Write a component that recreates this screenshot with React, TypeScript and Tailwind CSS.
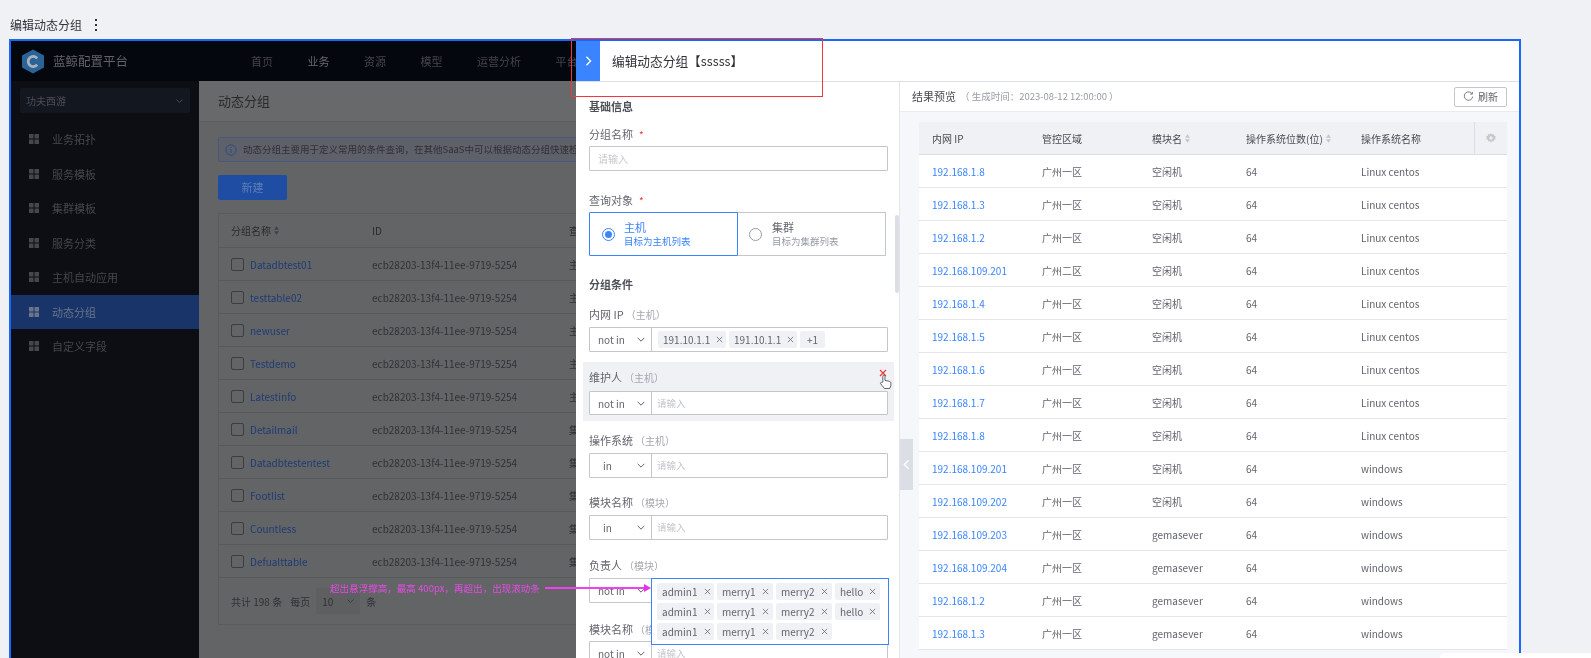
import React from "react";

const nav = [
  ["首页", "text-[#43454b]"],
  ["业务", "text-[#66686d]"],
  ["资源", "text-[#43454b]"],
  ["模型", "text-[#43454b]"],
  ["运营分析", "text-[#43454b]"],
  ["平台管理", "text-[#43454b]"],
];
const side = ["业务拓扑", "服务模板", "集群模板", "服务分类", "主机自动应用", "动态分组", "自定义字段"];
const groups: [string, string][] = [
  ["Datadbtest01", "主机"],
  ["testtable02", "主机"],
  ["newuser", "主机"],
  ["Testdemo", "主机"],
  ["Latestinfo", "主机"],
  ["Detailmail", "集群"],
  ["Datadbtestentest", "集群"],
  ["Footlist", "集群"],
  ["Countless", "集群"],
  ["Defualttable", "集群"],
];
const hosts = [
  ["192.168.1.8", "广州一区", "空闲机", "Linux centos"],
  ["192.168.1.3", "广州一区", "空闲机", "Linux centos"],
  ["192.168.1.2", "广州一区", "空闲机", "Linux centos"],
  ["192.168.109.201", "广州二区", "空闲机", "Linux centos"],
  ["192.168.1.4", "广州一区", "空闲机", "Linux centos"],
  ["192.168.1.5", "广州一区", "空闲机", "Linux centos"],
  ["192.168.1.6", "广州一区", "空闲机", "Linux centos"],
  ["192.168.1.7", "广州一区", "空闲机", "Linux centos"],
  ["192.168.1.8", "广州一区", "空闲机", "Linux centos"],
  ["192.168.109.201", "广州一区", "空闲机", "windows"],
  ["192.168.109.202", "广州一区", "空闲机", "windows"],
  ["192.168.109.203", "广州一区", "gemasever", "windows"],
  ["192.168.109.204", "广州一区", "gemasever", "windows"],
  ["192.168.1.2", "广州一区", "gemasever", "windows"],
  ["192.168.1.3", "广州一区", "gemasever", "windows"],
];

function Chevron({ className }: { className: string }) {
  return (
    <svg viewBox="0 0 12 8" fill="none" stroke="currentColor" strokeWidth="1.2" className={className}>
      <path d="M2 2l4 4 4-4" />
    </svg>
  );
}
function Grid() {
  return (
    <svg viewBox="0 0 10 10" className="w-[10px] h-[10px] shrink-0" fill="currentColor">
      <rect width="4.5" height="4.5" />
      <rect x="5.5" width="4.5" height="4.5" />
      <rect y="5.5" width="4.5" height="4.5" />
      <rect x="5.5" y="5.5" width="4.5" height="4.5" />
    </svg>
  );
}
function Sort({ light }: { light?: boolean }) {
  return (
    <svg viewBox="0 0 6 10" className="w-[5px] h-[9px] ml-[3px] inline-block" fill={light ? "#c4c6cc" : "#404145"}>
      <path d="M3 0l3 4H0zM3 10L0 6h6z" />
    </svg>
  );
}
function Close() {
  return (
    <svg viewBox="0 0 8 8" className="w-[7px] h-[7px] shrink-0 ml-[6px]" fill="none" stroke="#63656e" strokeWidth="0.9">
      <path d="M1 1l6 6M7 1L1 7" />
    </svg>
  );
}
function Tag({ t, w }: { t: string; w: string }) {
  return (
    <span className={`flex items-center justify-between h-[17px] px-[5px] rounded-[2px] bg-[#f0f1f5] text-[10px] text-[#63656e] ${w}`}>
      {t}
      <Close />
    </span>
  );
}
function FieldLabel({ a, b, cls }: { a: string; b?: string; cls: string }) {
  return (
    <div className={`h-4 flex items-center text-[11px] text-[#63656e] ${cls}`}>
      {a}
      {b && <span className="text-[10px] text-[#a5a7ae] ml-[2px]">（{b}）</span>}
    </div>
  );
}
function CondRow({ op, cls, children }: { op: string; cls: string; children?: React.ReactNode }) {
  return (
    <div className={`relative flex h-[25px] border border-[#c4c6cc] bg-white rounded-[1px] ${cls}`}>
      <div className={`w-[62px] shrink-0 flex items-center justify-between border-r border-[#c4c6cc] bg-white text-[10px] text-[#63656e] pr-[5px] ${op === "in" ? "pl-[13px]" : "pl-[8px]"}`}>
        {op}
        <Chevron className="w-[10px] h-[7px] text-[#63656e]" />
      </div>
      {children ?? <div className="flex-1 flex items-center pl-[5px] text-[9.5px] text-[#c4c6cc]">请输入</div>}
    </div>
  );
}
function Logo() {
  return (
    <svg viewBox="0 0 24 26" className="w-[22px] h-[25px] shrink-0">
      <polygon points="12,0 24,6.5 24,19.5 12,26 0,19.5 0,6.5" fill="#2a6397" />
      <path d="M16.5 9.5a5.5 5.5 0 1 0 0 7" fill="none" stroke="#aab3bd" strokeWidth="3" />
    </svg>
  );
}

export default function App() {
  return (
    <div className="relative w-[1591px] h-[658px] overflow-hidden bg-[#f0f1f5] font-['Noto_Sans_CJK_SC','Liberation_Sans',sans-serif] blur-[0.4px]">
      <div className="h-[39px] pl-[10px] pt-[11px] flex items-center text-[12px] text-[#313238]">
        编辑动态分组
        <span className="ml-[13px] flex flex-col gap-[3px]">
          <i className="block w-[2px] h-[2px] bg-[#313238]" />
          <i className="block w-[2px] h-[2px] bg-[#313238]" />
          <i className="block w-[2px] h-[2px] bg-[#313238]" />
        </span>
      </div>

      <div className="relative ml-[9px] w-[1512px] h-[625px] border-2 border-b-0 border-[#1768ff] overflow-hidden bg-[#0c0e14]">
        {/* 顶栏 */}
        <div className="h-[40px] bg-[#05070f] flex items-center pl-[11px]">
          <Logo />
          <div className="ml-[9px] w-[198px] text-[12.5px] text-[#62646a]">蓝鲸配置平台</div>
          <div className="flex gap-[34.5px] text-[11px]">
            {nav.map(([t, c]) => (
              <span key={t} className={`${c} whitespace-nowrap`}>{t}</span>
            ))}
          </div>
        </div>

        <div className="flex h-[585px]">
          {/* 侧栏 */}
          <div className="w-[188px] shrink-0 bg-[#0c0e14]">
            <div className="mx-[9px] mt-[7px] h-[25px] rounded-[2px] bg-[#131720] flex items-center justify-between pl-[6px] pr-[6px] text-[10px] text-[#4d4f55]">
              功夫西游
              <Chevron className="w-[9px] h-[6px] text-[#4d4f55]" />
            </div>
            <div className="mt-[9px] flex flex-col">
              {side.map((s) => (
                <div
                  key={s}
                  className={`h-[34.5px] flex items-center pl-[18px] gap-[13px] text-[11px] ${
                    s === "动态分组" ? "bg-[#183468] text-[#6b7589]" : "text-[#45474d]"
                  }`}
                >
                  <Grid />
                  {s}
                </div>
              ))}
            </div>
          </div>

          {/* 主内容 */}
          <div className="flex-1 bg-[#636466] min-w-0">
            <div className="h-[41px] bg-[#68696a] border-b border-[#5c5d5f] flex items-center pl-[19px] text-[13px] text-[#2a2b2d]">
              动态分组
            </div>
            <div className="px-[19px] pt-[15px]">
              <div className="h-[25px] w-[1000px] rounded-[2px] border border-[#49597a] bg-[#5e6169] flex items-center pl-[6px] gap-[6px] text-[9.5px] text-[#2f3033]">
                <svg viewBox="0 0 12 12" className="w-[12px] h-[12px]" fill="none" stroke="#274a8c" strokeWidth="0.9">
                  <circle cx="6" cy="6" r="5.2" />
                  <path d="M6 5v4M6 3v1" />
                </svg>
                动态分组主要用于定义常用的条件查询，在其他SaaS中可以根据动态分组快速检索
              </div>
              <button className="mt-[13px] w-[69px] h-[25px] rounded-[2px] bg-[#1e4da3] flex items-center justify-center text-[11px] text-[#5d7cb5]">
                新建
              </button>
              <div className="mt-[13px] w-[1000px] border border-[#5a5b5d] text-[10px] text-[#303134]">
                <div className="h-[34px] border-b border-[#58595b] flex items-center pl-[12px] text-[#2a2b2d]">
                  <div className="w-[141px] flex items-center">分组名称<Sort /></div>
                  <div className="w-[197px]">ID</div>
                  <div>查询对象</div>
                </div>
                {groups.map(([n, k]) => (
                  <div key={n} className="h-[33px] border-b border-[#58595b] flex items-center pl-[12px]">
                    <div className="w-[141px] flex items-center">
                      <i className="block w-[13px] h-[13px] border border-[#3c3d40] rounded-[2px] mr-[6px]" />
                      <span className="text-[10px] text-[#1f3b75]">{n}</span>
                    </div>
                    <div className="w-[197px]">ecb28203-13f4-11ee-9719-5254</div>
                    <div>{k}</div>
                  </div>
                ))}
                <div className="h-[46px] flex items-center pl-[12px]">
                  共计 198 条
                  <span className="ml-[8px]">每页</span>
                  <span className="ml-[6px] w-[44px] h-[26px] bg-[#5e5f61] flex items-center justify-between pl-[6px] pr-[5px]">
                    10
                    <Chevron className="w-[9px] h-[6px] text-[#3a3b3e]" />
                  </span>
                  <span className="ml-[6px]">条</span>
                </div>
              </div>
            </div>
          </div>
        </div>

        {/* 侧滑面板 */}
        <div className="absolute left-[565px] top-0 bottom-0 right-0 bg-white flex flex-col">
          <div className="h-[41px] shrink-0 flex border-b border-[#dcdee5] bg-white">
            <div className="w-[24px] bg-[#3a84ff] flex items-center justify-center">
              <svg viewBox="0 0 8 12" className="w-[7px] h-[10px]" fill="none" stroke="#fff" strokeWidth="1.6">
                <path d="M1.5 1l5 5-5 5" />
              </svg>
            </div>
            <div className="pl-[12px] flex items-center text-[12.7px] text-[#313238]">编辑动态分组【sssss】</div>
          </div>
          <div className="flex-1 flex min-h-0">
            {/* 表单 */}
            <div className="relative w-[324px] shrink-0 bg-white border-r border-[#e4e5ea] pl-[13px] pr-[11px] pt-[16px]">
              <div className="h-4 flex items-center text-[11px] font-bold text-[#4f5158]">基础信息</div>
              <div className="mt-[12px] h-4 flex items-center text-[11px] text-[#63656e]">
                分组名称<span className="ml-[6px] text-[#ea3636] text-[10px]">*</span>
              </div>
              <div className="mt-[4px] h-[25px] border border-[#c4c6cc] rounded-[1px] flex items-center pl-[8px] text-[10px] text-[#c4c6cc]">请输入</div>
              <div className="mt-[21px] h-4 flex items-center text-[11px] text-[#63656e]">
                查询对象<span className="ml-[6px] text-[#ea3636] text-[10px]">*</span>
              </div>
              <div className="mt-[4px] h-[44px] w-[297px] flex">
                <div className="w-[149px] border border-[#3a84ff] rounded-l-[1px] flex items-center pl-[12px] gap-[9px]">
                  <span className="w-[13px] h-[13px] rounded-full border border-[#3a84ff] flex items-center justify-center">
                    <i className="block w-[7px] h-[7px] rounded-full bg-[#3a84ff]" />
                  </span>
                  <div className="text-[#3a84ff] leading-[14px]">
                    <div className="text-[11px]">主机</div>
                    <div className="text-[9.5px]">目标为主机列表</div>
                  </div>
                </div>
                <div className="flex-1 border border-l-0 border-[#c4c6cc] flex items-center pl-[11px] gap-[10px]">
                  <span className="w-[13px] h-[13px] rounded-full border border-[#979ba5]" />
                  <div className="leading-[14px]">
                    <div className="text-[11px] text-[#63656e]">集群</div>
                    <div className="text-[9.5px] text-[#979ba5]">目标为集群列表</div>
                  </div>
                </div>
              </div>
              <div className="mt-[20px] h-4 flex items-center text-[11px] font-bold text-[#4f5158]">分组条件</div>

              <FieldLabel a="内网 IP" b="主机" cls="mt-[14px]" />
              <CondRow op="not in" cls="mt-[5px]">
                <div className="flex items-center gap-[3px] pl-[6px] text-[#63656e]">
                  <Tag t="191.10.1.1" w="w-[68px]" />
                  <Tag t="191.10.1.1" w="w-[68px]" />
                  <span className="h-[17px] w-[25px] rounded-[2px] bg-[#f0f1f5] flex items-center justify-center text-[10px]">+1</span>
                </div>
              </CondRow>

              <div className="relative -mx-[6px] mt-[10px] h-[59px] bg-[#f0f1f5] px-[6px] pt-[7px]">
                <FieldLabel a="维护人" b="主机" cls="" />
                <CondRow op="not in" cls="mt-[6px] !h-[24px]" />
                <svg viewBox="0 0 8 8" className="absolute left-[296px] top-[7px] w-[8px] h-[8px]" fill="none" stroke="#ea3636" strokeWidth="1.1">
                  <path d="M1 1l6 6M7 1L1 7" />
                </svg>
                <svg viewBox="0 0 12 14" className="absolute left-[296px] top-[12px] w-[13px] h-[15px]" fill="#fff" stroke="#4b4c50" strokeWidth="0.8">
                  <path d="M3.5 7.5V2a1 1 0 0 1 2 0v4l4 .8c1 .2 1.5.8 1.5 1.7V11l-1 2.5H5L1.5 9.2c-.7-.9.5-1.9 1.2-1.1z" />
                </svg>
              </div>

              <FieldLabel a="操作系统" b="主机" cls="mt-[11px]" />
              <CondRow op="in" cls="mt-[5px]" />
              <FieldLabel a="模块名称" b="模块" cls="mt-[16px]" />
              <CondRow op="in" cls="mt-[5px]" />
              <FieldLabel a="负责人" b="模块" cls="mt-[17px]" />
              <CondRow op="not in" cls="mt-[5px]">
                <div className="absolute left-[61px] -top-[1px] w-[238px] h-[67px] z-10 border border-[#3a84ff] bg-white flex flex-wrap content-start gap-x-[3px] gap-y-[3px] pl-[5px] pt-[4px]">
                  <Tag t="admin1" w="w-[57px]" />
                  <Tag t="merry1" w="w-[56px]" />
                  <Tag t="merry2" w="w-[56px]" />
                  <Tag t="hello" w="w-[45px]" />
                  <Tag t="admin1" w="w-[57px]" />
                  <Tag t="merry1" w="w-[56px]" />
                  <Tag t="merry2" w="w-[56px]" />
                  <Tag t="hello" w="w-[45px]" />
                  <Tag t="admin1" w="w-[57px]" />
                  <Tag t="merry1" w="w-[56px]" />
                  <Tag t="merry2" w="w-[56px]" />
                </div>
              </CondRow>
              <FieldLabel a="模块名称" b="模块" cls="mt-[18px]" />
              <CondRow op="not in" cls="mt-[4px]" />

              <div className="absolute right-0 top-[133px] w-[4px] h-[78px] rounded-[2px] bg-[#dcdee5]" />
            </div>

            {/* 预览 */}
            <div className="relative flex-1 min-w-0 bg-[#f5f7fa]">
              <div className="h-[30px] bg-white border-b border-[#eaebf0] flex items-center pl-[12px] pr-[12px]">
                <span className="text-[11px] text-[#4a4b52]">结果预览</span>
                <span className="ml-[4px] text-[9.5px] text-[#979ba5]">（ 生成时间：2023-08-12 12:00:00 ）</span>
                <button className="ml-auto w-[53px] h-[20px] border border-[#c4c6cc] rounded-[2px] bg-white flex items-center justify-center gap-[4px] text-[10px] text-[#63656e]">
                  <svg viewBox="0 0 12 12" className="w-[11px] h-[11px]" fill="none" stroke="#63656e" strokeWidth="0.9">
                    <path d="M10 3.2A4.6 4.6 0 1 0 10.6 6M10.2 1v2.4H7.8" />
                  </svg>
                  刷新
                </button>
              </div>
              <div className="ml-[19px] mr-[12px] mt-[10px] bg-white text-[10px] text-[#63656e]">
                <div className="h-[33px] bg-[#f0f1f5] border-b border-[#dcdee5] grid grid-cols-[123px_110px_94px_115px_113px_33px] items-center text-[#4a4b52]">
                  <div className="pl-[13px]">内网 IP</div>
                  <div>管控区域</div>
                  <div className="flex items-center">模块名<Sort light /></div>
                  <div className="flex items-center">操作系统位数(位)<Sort light /></div>
                  <div>操作系统名称</div>
                  <div className="h-full border-l border-[#dcdee5] flex items-center justify-center">
                    <svg viewBox="0 0 12 12" className="w-[10px] h-[10px]" fill="#c4c6cc">
                      <path d="M6 0l1.2 1.7 2-.5.4 2 2 .5-.6 2 .6 1.9-2 .5-.4 2-2-.5L6 12l-1.2-2.4-2 .5-.4-2-2-.5.6-1.9-.6-2 2-.5.4-2 2 .5zM6 4a2 2 0 1 0 0 4 2 2 0 0 0 0-4z" fillRule="evenodd" />
                    </svg>
                  </div>
                </div>
                {hosts.map((h, i) => (
                  <div key={i} className="h-[33px] border-b border-[#e4e5ea] grid grid-cols-[123px_110px_94px_115px_146px] items-center">
                    <div className="pl-[13px] text-[#3a84ff]">{h[0]}</div>
                    <div>{h[1]}</div>
                    <div>{h[2]}</div>
                    <div>64</div>
                    <div>{h[3]}</div>
                  </div>
                ))}
              </div>
              <div className="absolute left-0 top-[357px] w-[13px] h-[51px] bg-[#dcdee5] flex items-center justify-center">
                <svg viewBox="0 0 8 12" className="w-[7px] h-[11px]" fill="none" stroke="#fff" strokeWidth="1.5">
                  <path d="M6.5 1l-5 5 5 5" />
                </svg>
              </div>
            </div>
          </div>
        </div>
      </div>

      {/* 标注 */}
      <div className="absolute left-[571px] top-[38px] w-[252px] h-[59px] border border-[#f0383c]" />
      <div className="absolute left-[330px] top-[580px] flex items-center leading-[16px] text-[9.55px] text-[#e64be6] whitespace-nowrap">
        超出悬浮撑高，最高 400px，再超出，出现滚动条
        <i className="block ml-[5px] w-[99px] h-[2px] bg-[#f040f0]" />
        <i className="block border-y-[4px] border-y-transparent border-l-[7px] border-l-[#e633e6]" />
      </div>
      <div className="absolute left-[1440px] top-[653px] right-0 bottom-0 bg-white rounded-tl-[6px]" />
    </div>
  );
}
